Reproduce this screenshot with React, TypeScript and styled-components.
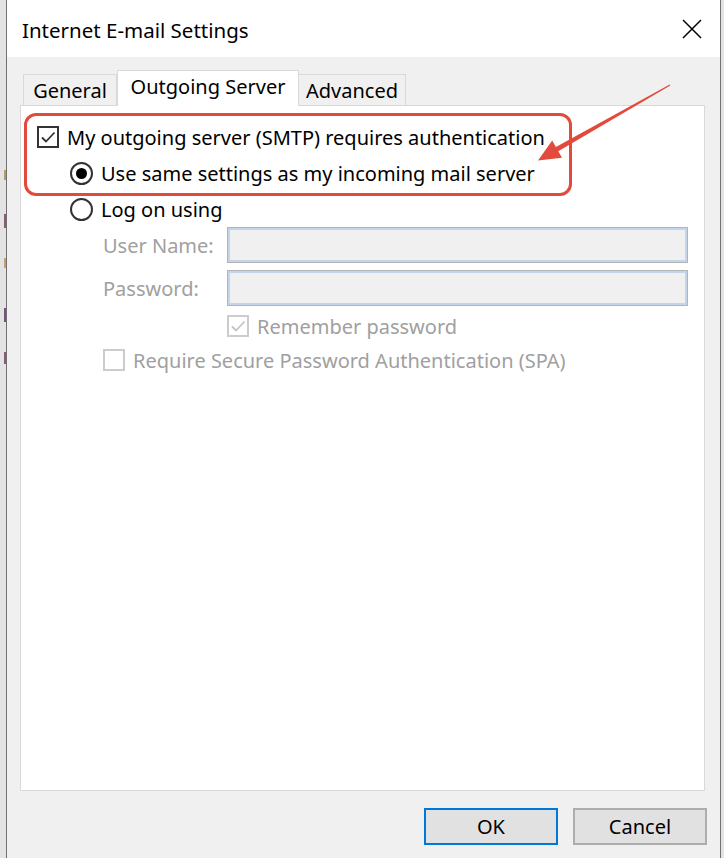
import React from "react";
import styled, { createGlobalStyle } from "styled-components";

const GlobalStyle = createGlobalStyle`
  html, body { margin: 0; padding: 0; }
  body {
    background: #dedede;
    font-family: "Noto Sans", "Open Sans", sans-serif;
    font-size: 20px;
    color: #000;
  }
`;

const Page = styled.div`
  position: relative;
  display: flex;
  width: 724px;
  height: 858px;
  overflow: hidden;
`;

const SideStrip = styled.div<{ $w: number }>`
  width: ${(p) => p.$w}px;
  flex: none;
  background: #e3e3e3;
  display: flex;
  flex-direction: column;
  align-items: flex-end;
`;

const Fragment = styled.span<{ $top: number; $h: number; $c: string }>`
  display: block;
  margin-top: ${(p) => p.$top}px;
  width: 2px;
  height: ${(p) => p.$h}px;
  background: ${(p) => p.$c};
`;

const Dialog = styled.div`
  flex: 1;
  display: flex;
  flex-direction: column;
  border-left: 1px solid #707070;
  border-right: 1px solid #707070;
  background: #f0f0f0;
`;

const TitleBar = styled.div`
  height: 57px;
  flex: none;
  background: #fff;
  display: flex;
  align-items: center;
  justify-content: space-between;
  padding: 0 18px 0 15px;
`;

const Title = styled.div`
  font-size: 20.5px;
  color: #000;
  margin-top: 2px;
`;

const Body = styled.div`
  flex: 1;
  display: flex;
  flex-direction: column;
  padding: 13px 15px 0 13px;
`;

const TabRow = styled.div`
  display: flex;
  align-items: flex-end;
  height: 36px;
  padding-left: 3px;
  margin-bottom: -1px;
  position: relative;
  z-index: 1;
`;

const Tab = styled.div<{ $active?: boolean; $w: number }>`
  box-sizing: border-box;
  width: ${(p) => p.$w}px;
  height: ${(p) => (p.$active ? 36 : 32)}px;
  border: 1px solid #d9d9d9;
  border-bottom: ${(p) => (p.$active ? "none" : "1px solid #d9d9d9")};
  background: ${(p) => (p.$active ? "#fff" : "#f0f0f0")};
  margin-left: ${(p) => (p.$active ? 0 : -1)}px;
  display: flex;
  align-items: center;
  justify-content: center;
  padding-bottom: ${(p) => (p.$active ? 5 : 0)}px;
  font-size: 20px;
  &:first-child { margin-left: 0; }
`;

const Panel = styled.div`
  box-sizing: border-box;
  height: 686px;
  background: #fff;
  border: 1px solid #d9d9d9;
  padding: 13px 16px 0 16px;
  display: flex;
  flex-direction: column;
`;

const Row = styled.div<{ $indent?: number; $h?: number; $mt?: number }>`
  display: flex;
  align-items: center;
  height: ${(p) => p.$h ?? 36}px;
  margin-left: ${(p) => p.$indent ?? 0}px;
  margin-top: ${(p) => p.$mt ?? 0}px;
  gap: 8px;
`;

const Label = styled.span<{ $disabled?: boolean }>`
  color: ${(p) => (p.$disabled ? "#a0a0a0" : "#000")};
  white-space: nowrap;
  font-size: 20px;
`;

const Box = styled.span<{ $disabled?: boolean }>`
  box-sizing: border-box;
  width: 22px;
  height: 22px;
  flex: none;
  border: 2px solid ${(p) => (p.$disabled ? "#cccccc" : "#333333")};
  background: #fff;
  display: flex;
  align-items: center;
  justify-content: center;
`;

const Radio = styled.span<{ $checked?: boolean }>`
  box-sizing: border-box;
  width: 23px;
  height: 23px;
  flex: none;
  border-radius: 50%;
  border: 2px solid #333;
  background: #fff;
  display: flex;
  align-items: center;
  justify-content: center;
  &::after {
    content: "";
    display: ${(p) => (p.$checked ? "block" : "none")};
    width: 11px;
    height: 11px;
    border-radius: 50%;
    background: #000;
  }
`;

const FieldRow = styled.div<{ $mt?: number }>`
  display: flex;
  align-items: center;
  margin-left: 66px;
  margin-top: ${(p) => p.$mt ?? 0}px;
  height: 36px;
`;

const FieldLabel = styled.span`
  width: 124px;
  flex: none;
  color: #a0a0a0;
  font-size: 20px;
`;

const Input = styled.div`
  box-sizing: border-box;
  width: 461px;
  height: 36px;
  background: #f0f0f0;
  border: 1px solid #b4b4b4;
  box-shadow: inset 0 0 0 2px #c5d5e9;
`;

const Footer = styled.div`
  display: flex;
  justify-content: flex-end;
  gap: 15px;
  padding: 17px 0 0 0;
  margin-right: -2px;
`;

const Button = styled.div<{ $primary?: boolean }>`
  box-sizing: border-box;
  width: 134px;
  height: 37px;
  background: #e1e1e1;
  border: 2px solid ${(p) => (p.$primary ? "#0078d7" : "#adadad")};
  display: flex;
  align-items: center;
  justify-content: center;
  font-size: 20px;
`;

const Highlight = styled.div`
  position: absolute;
  left: 24px;
  top: 113px;
  width: 548px;
  height: 83px;
  box-sizing: border-box;
  border: 3px solid #e24a3b;
  border-radius: 12px;
  pointer-events: none;
`;

const Overlay = styled.svg`
  position: absolute;
  left: 0;
  top: 0;
  pointer-events: none;
`;

const Check = ({ color }: { color: string }) => (
  <svg width="16" height="16" viewBox="0 0 16 16">
    <path d="M2 8.5 L6 12.5 L14.5 3.5" fill="none" stroke={color} strokeWidth="1.8" />
  </svg>
);

const CloseIcon = () => (
  <svg width="20" height="20" viewBox="0 0 20 20">
    <path d="M1 1 L19 19 M19 1 L1 19" stroke="#000" strokeWidth="1.5" />
  </svg>
);

export default function App() {
  return (
    <>
      <GlobalStyle />
      <Page>
        <SideStrip $w={6}>
          <Fragment $top={170} $h={10} $c="#b59a6a" />
          <Fragment $top={34} $h={14} $c="#8a5a7a" />
          <Fragment $top={30} $h={10} $c="#c2a070" />
          <Fragment $top={40} $h={14} $c="#7a4f80" />
          <Fragment $top={30} $h={12} $c="#8a5a7a" />
        </SideStrip>
        <Dialog>
          <TitleBar>
            <Title>Internet E-mail Settings</Title>
            <CloseIcon />
          </TitleBar>
          <Body>
            <TabRow>
              <Tab $w={94}>General</Tab>
              <Tab $w={182} $active>Outgoing Server</Tab>
              <Tab $w={108}>Advanced</Tab>
            </TabRow>
            <Panel>
              <Row>
                <Box>
                  <Check color="#333" />
                </Box>
                <Label>My outgoing server (SMTP) requires authentication</Label>
              </Row>
              <Row $indent={33}>
                <Radio $checked />
                <Label>Use same settings as my incoming mail server</Label>
              </Row>
              <Row $indent={33}>
                <Radio />
                <Label>Log on using</Label>
              </Row>
              <FieldRow>
                <FieldLabel>User Name:</FieldLabel>
                <Input />
              </FieldRow>
              <FieldRow $mt={7}>
                <FieldLabel>Password:</FieldLabel>
                <Input />
              </FieldRow>
              <Row $indent={190} $h={34} $mt={3}>
                <Box $disabled>
                  <Check color="#c4c4c4" />
                </Box>
                <Label $disabled>Remember password</Label>
              </Row>
              <Row $indent={66} $h={34}>
                <Box $disabled />
                <Label $disabled>Require Secure Password Authentication (SPA)</Label>
              </Row>
            </Panel>
            <Footer>
              <Button $primary>OK</Button>
              <Button>Cancel</Button>
            </Footer>
          </Body>
        </Dialog>
        <SideStrip $w={5}>
          <Fragment $top={195} $h={12} $c="#4a6a9a" />
          <Fragment $top={30} $h={10} $c="#c2a070" />
          <Fragment $top={6} $h={12} $c="#8a4a6a" />
          <Fragment $top={130} $h={10} $c="#8a4a6a" />
        </SideStrip>
        <Highlight />
        <Overlay width="724" height="858" viewBox="0 0 724 858">
          <polygon
            points="670.3,85.4 558.3,151.3 562,157.8 538,160.5 552.2,140.4 555.9,146.9 669.7,84.6"
            fill="#e24a3b"
          />
        </Overlay>
      </Page>
    </>
  );
}
